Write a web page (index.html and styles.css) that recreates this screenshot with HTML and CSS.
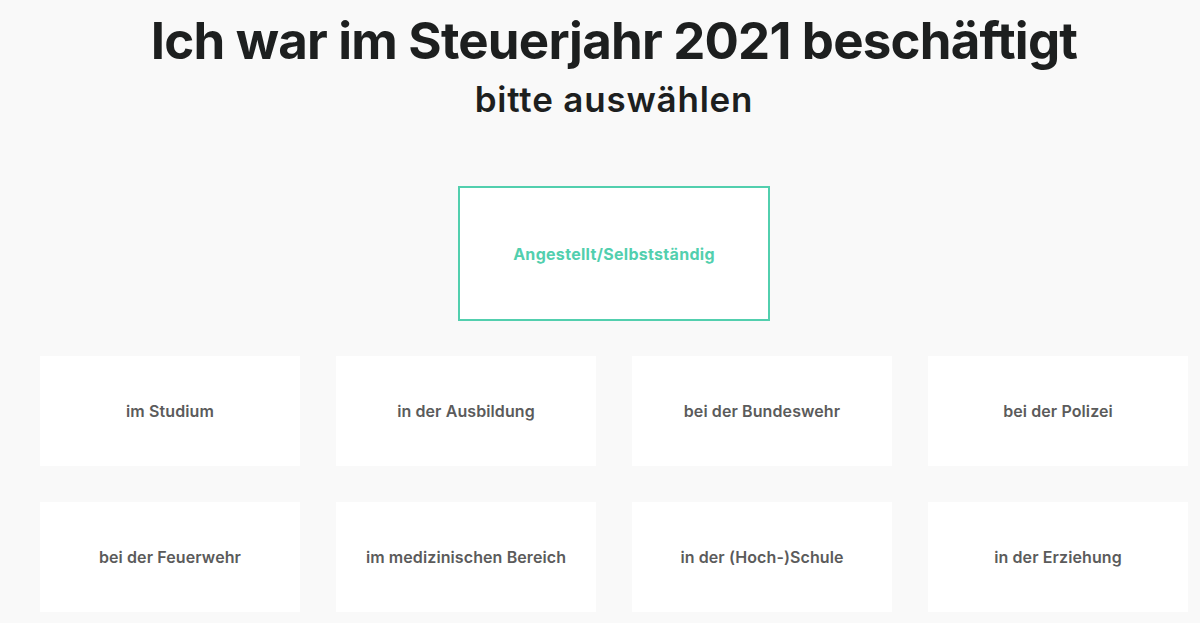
FILE: index.html
```html
<!DOCTYPE html>
<html lang="de">
<head>
    <meta charset="utf-8">
    <title>Beschäftigung 2021</title>
    <link rel="stylesheet" href="styles.css">
</head>
<body>
    <main class="page">
        <header class="question">
            <h1>Ich war im Steuerjahr 2021 beschäftigt</h1>
            <h2>bitte auswählen</h2>
        </header>

        <!-- Hauptauswahl -->
        <div class="primary-row">
            <button class="option option-primary">Angestellt/Selbstständig</button>
        </div>

        <!-- Weitere Beschäftigungsarten -->
        <div class="option-grid">
            <button class="option">im Studium</button>
            <button class="option">in der Ausbildung</button>
            <button class="option">bei der Bundeswehr</button>
            <button class="option">bei der Polizei</button>
            <button class="option">bei der Feuerwehr</button>
            <button class="option">im medizinischen Bereich</button>
            <button class="option">in der (Hoch-)Schule</button>
            <button class="option">in der Erziehung</button>
        </div>
    </main>
</body>
</html>
```

FILE: styles.css
```css
* {
    margin: 0;
    box-sizing: border-box;
}

body {
    background-color: #f9f9f9;
    font-family: "Inter", "Noto Sans", sans-serif;
    color: #1d1f1f;
}

.page {
    padding: 13px 0 0 28px;
}

.question {
    text-align: center;
}

h1 {
    font-size: 51px;
    font-weight: 700;
    letter-spacing: -0.8px;
    line-height: 56px;
}

h2 {
    font-size: 35px;
    font-weight: 600;
    letter-spacing: 0.8px;
    line-height: 40px;
    margin-top: 10px;
}

.primary-row {
    display: flex;
    justify-content: center;
    margin-top: 67px;
}

.option {
    display: flex;
    align-items: center;
    justify-content: center;
    height: 110px;
    background-color: #fff;
    border: none;
    font-family: inherit;
    font-size: 16px;
    font-weight: 600;
    letter-spacing: 0.1px;
    color: #5b5b5b;
    cursor: pointer;
}

.option-primary {
    width: 312px;
    height: 135px;
    border: 2px solid #52cfae;
    color: #52cfae;
    font-weight: 700;
    letter-spacing: 0.3px;
}

.option-grid {
    display: grid;
    grid-template-columns: repeat(4, 260px);
    gap: 36px;
    justify-content: center;
    margin-top: 35px;
}
```
